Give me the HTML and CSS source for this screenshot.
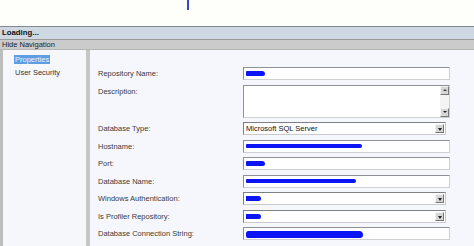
FILE: index.html
```html
<!DOCTYPE html>
<html lang="en">
<head>
    <meta charset="UTF-8">
    <title>Repository Properties</title>
    <link rel="stylesheet" href="styles.css">
</head>
<body>
    <div class="topbar"><span class="caret"></span></div>
    <div class="loading">Loading...</div>
    <div class="hidenav">Hide Navigation</div>

    <div class="main">
        <ul class="nav">
            <li class="active">Properties</li>
            <li>User Security</li>
        </ul>

        <div class="content">
            <div class="form">
                <label>Repository Name:</label>
                <div class="field"><span class="redact short"></span></div>

                <label>Description:</label>
                <div class="field area">
                    <span class="scroll">
                        <span class="btn up"></span>
                        <span class="btn down"></span>
                    </span>
                </div>

                <label>Database Type:</label>
                <div class="field select">Microsoft SQL Server<span class="btn drop"></span></div>

                <label>Hostname:</label>
                <div class="field"><span class="redact long"></span></div>

                <label>Port:</label>
                <div class="field"><span class="redact short"></span></div>

                <label>Database Name:</label>
                <div class="field"><span class="redact long mid"></span></div>

                <label>Windows Authentication:</label>
                <div class="field select"><span class="redact tiny"></span><span class="btn drop"></span></div>

                <label>Is Profiler Repository:</label>
                <div class="field select"><span class="redact tiny"></span><span class="btn drop"></span></div>

                <label>Database Connection String:</label>
                <div class="field"><span class="redact long thick"></span></div>
            </div>
        </div>
    </div>
</body>
</html>
```

FILE: styles.css
```css
body {
    margin: 0;
    font-family: 'Liberation Sans', Arial, sans-serif;
    font-size: 7.5px;
    color: #222;
    background-color: #fefefb;
    height: 246px;
    display: flex;
    flex-direction: column;
    overflow: hidden;
}

.topbar {
    height: 26px;
    padding-left: 187px;
}

.caret {
    display: block;
    width: 2px;
    height: 10px;
    background-color: #3a46c8;
}

.loading {
    border-top: 1px solid #858a92;
    height: 12px;
    line-height: 12px;
    padding-left: 2px;
    font-weight: bold;
    font-size: 7.8px;
    color: #111;
    background-color: #cfd7e2;
}

.hidenav {
    border-top: 1px solid #9a9a9a;
    border-bottom: 1px solid #b5b5b5;
    height: 9px;
    line-height: 9px;
    padding-left: 2px;
    color: #222;
    background-color: #cbcbcb;
}

.main {
    flex: 1;
    display: flex;
}

.nav {
    list-style: none;
    margin: 0;
    width: 90px;
    box-sizing: border-box;
    padding: 5px 0 0 11px;
    border-left: 3px solid #bdbdbd;
    border-right: 4px solid #c6c6c6;
    background-color: #f6f7fb;
}

.nav li {
    height: 9px;
    line-height: 9px;
    padding: 0 1px;
    margin-bottom: 4px;
    width: max-content;
    color: #333;
}

.nav li.active {
    width: 34px;
    color: #eef4ff;
    background-color: #5f9de2;
}

.content {
    flex: 1;
    padding: 17px 0 0 8px;
    background-color: #f6f7fc;
}

.form {
    display: grid;
    grid-template-columns: 145px 207px;
    row-gap: 4.5px;
}

.form label {
    line-height: 13px;
    color: #3a3a3a;
}

.field {
    position: relative;
    height: 13px;
    box-sizing: border-box;
    border: 1px solid #cfd0d3;
    border-top-color: #8f9196;
    border-left-color: #8f9196;
    background-color: #fff;
    display: flex;
    align-items: center;
    padding-left: 2px;
}

.field.area {
    height: 33px;
    align-items: stretch;
    justify-content: flex-end;
    padding: 0;
}

.field.select {
    width: 203px;
    line-height: 11px;
    color: #111;
    border-color: #7d7f84;
    border-right-color: #c9cacd;
    border-bottom-color: #c9cacd;
}

.scroll {
    width: 9px;
    display: flex;
    flex-direction: column;
    justify-content: space-between;
    background-color: #f4f4f4;
}

.btn {
    display: block;
    width: 9px;
    height: 9px;
    box-sizing: border-box;
    border: 1px solid #f4f4f4;
    border-right-color: #777;
    border-bottom-color: #777;
    background-color: #d6d6d6;
    position: relative;
}

.btn::after {
    content: '';
    position: absolute;
    left: 1.5px;
    top: 2px;
    border-left: 2px solid transparent;
    border-right: 2px solid transparent;
}

.btn.up::after {
    border-bottom: 2px solid #444;
}

.btn.down::after,
.btn.drop::after {
    border-top: 2px solid #222;
}

.btn.drop {
    position: absolute;
    right: 1px;
    top: 1px;
    width: 9px;
    height: 9px;
}

.btn.drop::after {
    left: 1.5px;
    top: 3px;
    border-top-width: 3px;
}

.redact {
    display: block;
    height: 5px;
    background-color: #0a14f5;
    border-radius: 1px 3px 2px 1px;
}

.redact.short {
    width: 19px;
}

.redact.tiny {
    width: 15px;
    height: 5px;
    border-radius: 0 3px 3px 0;
}

.redact.long {
    width: 116px;
    height: 4px;
    border-radius: 2px 4px 4px 2px;
}

.redact.mid {
    width: 110px;
}

.redact.thick {
    width: 117px;
    height: 7px;
    margin-top: 2px;
    border-radius: 4px 6px 5px 3px;
}
```
